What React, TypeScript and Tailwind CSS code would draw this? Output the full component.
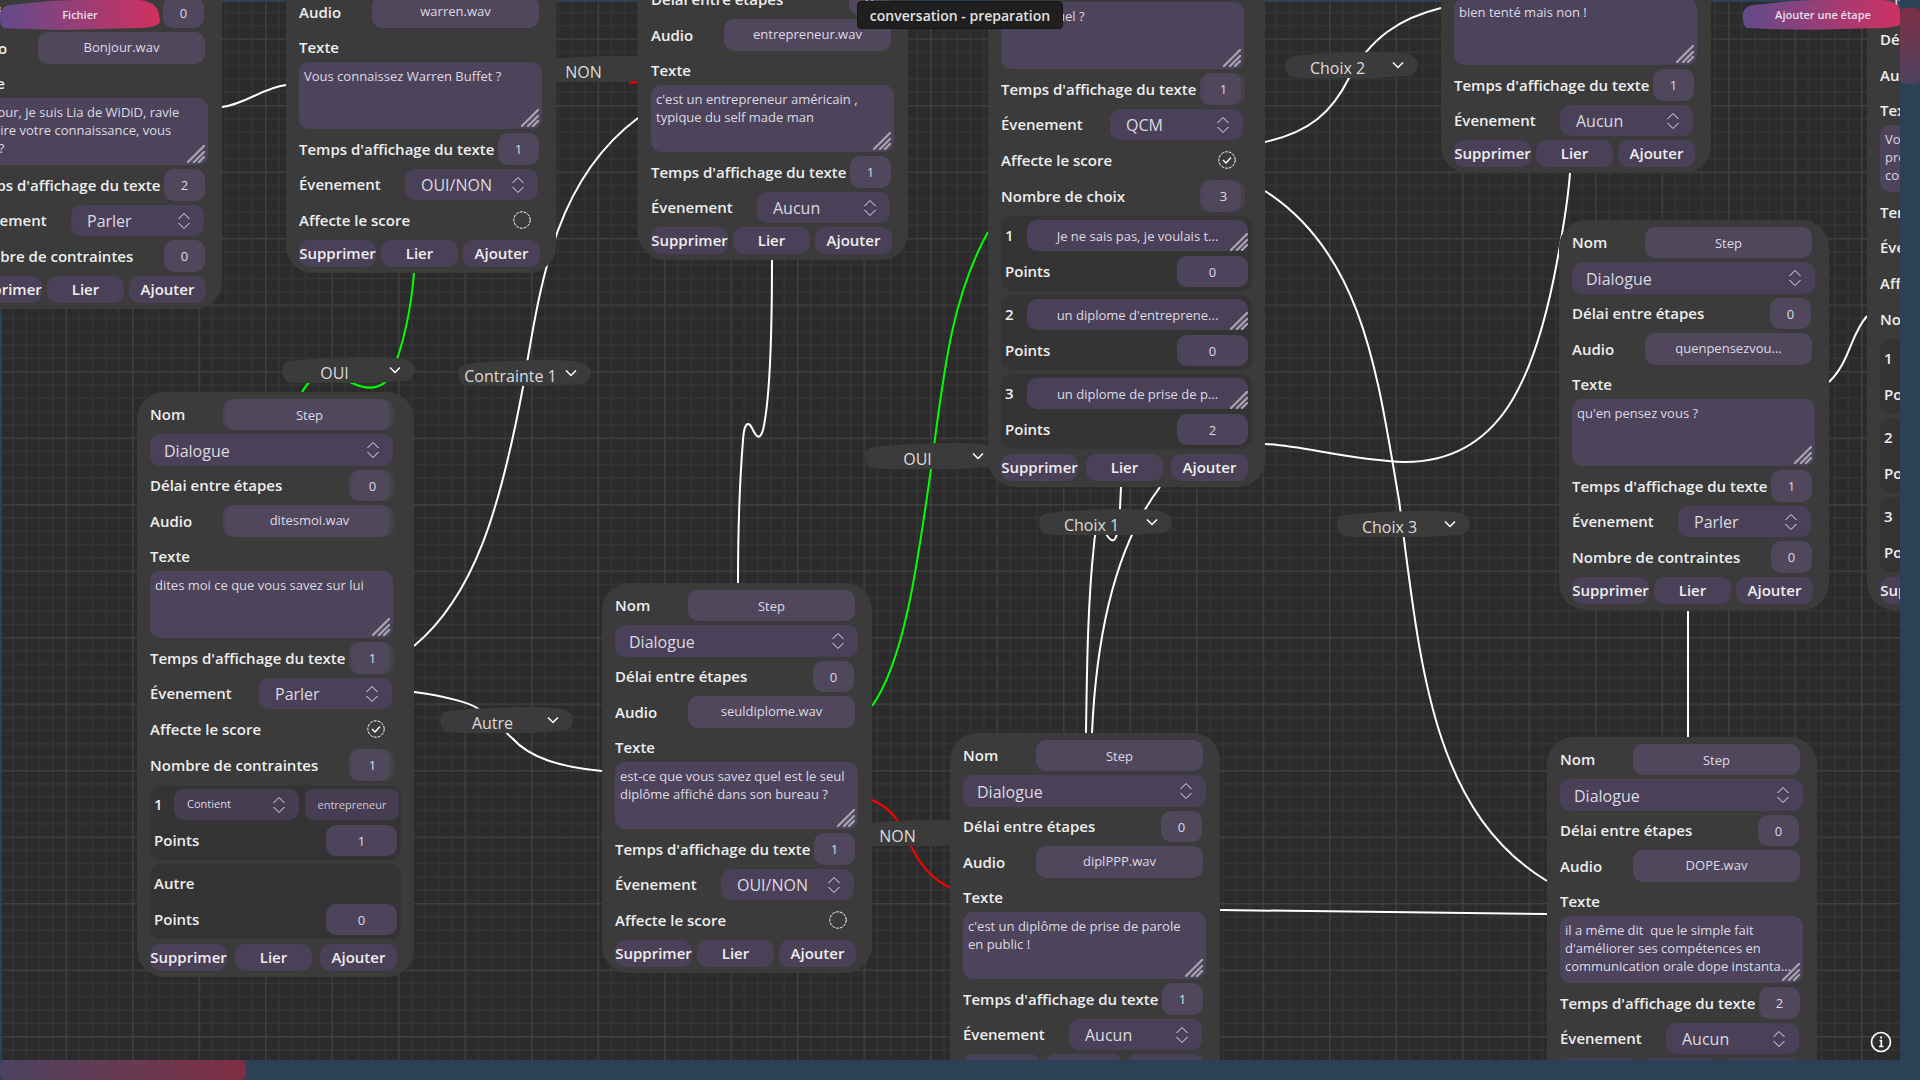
import type { ReactNode } from "react"
import clsx from "clsx"

type Choice = {
    text?: string
    rule?: string
    word?: string
    points: string
}

type Step = {
    id: string
    x: number
    y: number
    wide?: boolean
    audio: string
    text: string
    time: string
    event: string
    score?: boolean
    count?: string
    choices?: Choice[]
}

const qcmChoices: Choice[] = [
    { text: "Je ne sais pas, je voulais t...", points: "0" },
    { text: "un diplome d'entreprene...", points: "0" },
    { text: "un diplome de prise de p...", points: "2" },
]

const steps: Step[] = [
    { id: "bonjour", x: -48, y: -81, audio: "Bonjour.wav", text: "Bonjour, je suis Lia de WiDiD, ravie\nde faire votre connaissance, vous\nêtes ?", time: "2", event: "Parler", count: "0" },
    { id: "warren", x: 286, y: -117, audio: "warren.wav", text: "Vous connaissez Warren Buffet ?", time: "1", event: "OUI/NON", score: false },
    { id: "entrepreneur", x: 638, y: -94, audio: "entrepreneur.wav", text: "c'est un entrepreneur américain ,\ntypique du self made man", time: "1", event: "Aucun" },
    { id: "lequel", x: 988, y: -177, wide: true, audio: "lequel.wav", text: "C'est lequel ?", time: "1", event: "QCM", score: true, count: "3", choices: qcmChoices },
    { id: "tente", x: 1441, y: -181, audio: "bientente.wav", text: "bien tenté mais non !", time: "1", event: "Aucun" },
    { id: "pensez", x: 1559, y: 220, audio: "quenpensezvou...", text: "qu'en pensez vous ?", time: "1", event: "Parler", count: "0" },
    { id: "voulez", x: 1867, y: -54, wide: true, audio: "voulez.wav", text: "Vous\nprenez\ncombien ?", time: "1", event: "QCM", score: true, count: "3", choices: qcmChoices },
    {
        id: "ditesmoi", x: 137, y: 392, wide: true, audio: "ditesmoi.wav", text: "dites moi ce que vous savez sur lui", time: "1", event: "Parler", score: true, count: "1",
        choices: [{ rule: "Contient", word: "entrepreneur", points: "1" }, { points: "0" }],
    },
    { id: "seuldiplome", x: 602, y: 583, audio: "seuldiplome.wav", text: "est-ce que vous savez quel est le seul\ndiplôme affiché dans son bureau ?", time: "1", event: "OUI/NON", score: false },
    { id: "diplppp", x: 950, y: 733, audio: "diplPPP.wav", text: "c'est un diplôme de prise de parole\nen public !", time: "1", event: "Aucun" },
    { id: "dope", x: 1547, y: 737, audio: "DOPE.wav", text: "il a même dit  que le simple fait\nd'améliorer ses compétences en\ncommunication orale dope instanta...", time: "2", event: "Aucun" },
]

const links = [
    { id: "1", label: "OUI", x: 282, y: 357 },
    { id: "2", label: "Contrainte 1", x: 458, y: 360 },
    { id: "3", label: "NON", x: 531, y: 56 },
    { id: "4", label: "Choix 2", x: 1285, y: 52 },
    { id: "5", label: "OUI", x: 865, y: 443 },
    { id: "6", label: "Choix 1", x: 1039, y: 509 },
    { id: "7", label: "Choix 3", x: 1337, y: 511 },
    { id: "8", label: "Autre", x: 440, y: 707 },
    { id: "9", label: "NON", x: 845, y: 820 },
]

const wires = [
    { color: "#fff", d: "M222 107 C246 104 262 88 286 85" },
    { color: "#fff", d: "M414 646 C474 596 500 510 523 387 C541 280 555 180 638 118" },
    { color: "#fff", d: "M772 260 C772 330 770 400 763 430 C759 444 754 432 752 428 C748 420 744 424 743 440 C739 490 738 530 738 583" },
    { color: "#fff", d: "M414 692 C445 696 470 703 477 708 C495 720 505 732 512 738 C530 758 560 767 602 771" },
    { color: "#fff", d: "M1121 487 L1120 508 C1118 545 1113 545 1106 534 C1098 520 1095 530 1094 545 C1088 600 1087 660 1086 733" },
    { color: "#fff", d: "M1160 487 C1120 540 1097 620 1092 733" },
    { color: "#fff", d: "M1265 142 C1310 132 1332 112 1349 78 C1370 38 1400 18 1441 8" },
    { color: "#fff", d: "M1265 191 C1365 255 1378 380 1399 500 C1420 660 1430 810 1547 881" },
    { color: "#fff", d: "M1265 444 C1300 445 1350 460 1405 462 C1500 462 1535 380 1557 262 C1563 230 1568 200 1570 173" },
    { color: "#fff", d: "M1688 611 V737" },
    { color: "#fff", d: "M1829 382 C1850 362 1850 335 1867 316" },
    { color: "#fff", d: "M1220 910 L1547 914" },
    { color: "#0f0", d: "M414 273 C411 310 403 345 392 373 C382 392 366 390 350 382 C332 368 315 370 302 392" },
    { color: "#0f0", d: "M872 706 C905 660 918 560 931 469 C943 380 950 300 988 232" },
    { color: "#f00", d: "M872 800 C900 812 900 830 912 848 C922 868 935 881 951 888" },
    { color: "#f00", d: "M629 82.5 H638" },
]

const minor = [13.3, 26.6, 39.9, 53.2]

const Grid = () => (
    <div className="absolute inset-0 overflow-hidden border-t-2 border-l-2 border-[#2c4156] bg-[#2b2b2b]">
        <svg className="h-full w-full" aria-hidden="true">
            <defs>
                <pattern id="grid" x="-3" y="36.5" width="66.5" height="66.5" patternUnits="userSpaceOnUse">
                    {minor.map(m => (
                        <path key={m} d={`M${m + 0.6} 0 V66.5 M0 ${m + 0.6} H66.5`} stroke="#353535" strokeWidth="1.4" />
                    ))}
                    <path d="M0.7 0 V66.5 M0 0.7 H66.5" stroke="#404040" strokeWidth="1.4" />
                </pattern>
            </defs>
            <rect width="100%" height="100%" fill="url(#grid)" />
        </svg>
    </div>
)

const UpDown = () => (
    <svg className="pointer-events-none absolute top-1/2 right-3.5 h-4 w-3 -translate-y-1/2" viewBox="0 0 12 16" fill="none" stroke="#e8e6ec" aria-hidden="true">
        <path d="M0.5 6 L6 0.5 L11.5 6 M0.5 10 L6 15.5 L11.5 10" />
    </svg>
)

const Grip = ({ className }: { className: string }) => (
    <svg className={clsx("pointer-events-none absolute h-[18px] w-[18px]", className)} viewBox="0 0 18 18" stroke="#a7a3ad" strokeWidth="2.4" strokeLinecap="round" aria-hidden="true">
        <path d="M1 17 L17 1 M7 17 L17 7 M12 17 L17 12" />
    </svg>
)

const Field = ({ label, height, className, children }: { label: string, height: string, className?: string, children: ReactNode }) => (
    <label className={clsx("flex items-center justify-between whitespace-nowrap", height, className)}>
        <span>{label}</span>
        {children}
    </label>
)

const boxClass = "h-full rounded-[10px] text-center text-[13px] font-normal text-[#dedae3]"

const Select = ({ value, className, label }: { value: string, className: string, label?: string }) => (
    <span className="relative block h-full">
        <select defaultValue={value} aria-label={label} className={clsx("h-full appearance-none rounded-[10px] font-normal text-[#dcdae0]", className)}>
            <option>{value}</option>
        </select>
        <UpDown />
    </span>
)

const ScoreCheck = ({ checked }: { checked: boolean }) => (
    <span className="relative block h-[18px] w-[18px]">
        <input type="checkbox" defaultChecked={checked} className="block h-[18px] w-[18px] appearance-none" />
        <svg className="pointer-events-none absolute inset-0" viewBox="0 0 18 18" fill="none" stroke="#fff" aria-hidden="true">
            <circle cx="9" cy="9" r="8.2" strokeDasharray="3 1" />
            {checked && <path d="M5 9 L8 12 L13 6.5" strokeWidth="1.4" />}
        </svg>
    </span>
)

const ChoiceBox = ({ choice, index }: { choice: Choice, index: number }) => (
    <div className="flex w-[251px] flex-col gap-[5px] rounded-[10px] bg-[#343434] py-1 pr-1 pl-1">
        {choice.text && (
            <Field label={String(index + 1)} height="h-[31px]">
                <span className="relative block h-full">
                    <input type="text" defaultValue={choice.text} className={clsx(boxClass, "w-[221px] bg-[#4a4158]")} />
                    <Grip className="right-0 bottom-0" />
                </span>
            </Field>
        )}
        {choice.rule && (
            <div className="-mr-0.5 flex h-[31px] items-center">
                <span className="w-5">{index + 1}</span>
                <Select value={choice.rule} label="Règle" className="w-[125px] bg-[#463d52] pl-[13px] text-[11px]" />
                <input type="text" aria-label="Mot" defaultValue={choice.word} className="ml-auto h-full w-[94px] rounded-lg bg-[#463d52] text-center text-[11px] font-normal text-[#ccc7d1]" />
            </div>
        )}
        {!choice.text && !choice.rule && <div className="flex h-[31px] items-center">Autre</div>}
        <Field label="Points" height="h-[31px]">
            <input type="text" inputMode="numeric" defaultValue={choice.points} className={clsx(boxClass, "w-[71px] bg-[#4d445b]")} />
        </Field>
    </div>
)

const StepCard = ({ step }: { step: Step }) => {
    const { wide } = step
    const input = clsx(boxClass, "bg-[#50475d]", wide && "pl-1.5 shadow-[4px_0_0_#434244,inset_3px_0_0_#4b4359]")
    const pr = wide ? "pr-[3px]" : "pr-1"

    return (
        <article
            className={clsx("absolute flex flex-col gap-1 rounded-[27px] bg-[#3b3b3b] pt-[7px] pb-1.5 pl-[13px] text-[15px] font-semibold text-[#eeeeee]", wide ? "w-[277px]" : "w-[270px]")}
            style={{ left: step.x, top: step.y }}
        >
            <div className="flex w-[243px] flex-col gap-1">
                <Field label="Nom" height="h-[31px]" className="pr-[3px]">
                    <input type="text" defaultValue="Step" className={clsx(input, "w-[167px]")} />
                </Field>
                <div className="h-8">
                    <Select value="Dialogue" label="Type" className="w-[243px] bg-[#4a4158] pt-0.5 pl-3.5 text-base" />
                </div>
                <Field label="Délai entre étapes" height="h-[31px]" className={pr}>
                    <input type="text" inputMode="numeric" defaultValue="0" className={clsx(input, "w-[41px]")} />
                </Field>
                <Field label="Audio" height="h-8" className="pr-[3px]">
                    <button type="button" className={clsx(input, "w-[167px]")}>{step.audio}</button>
                </Field>
                <label htmlFor={step.id} className="flex h-[26px] items-center pt-1">Texte</label>
                <div className="relative h-[67px]">
                    <textarea
                        id={step.id}
                        defaultValue={step.text}
                        className="block h-full w-full resize-none overflow-hidden rounded-[10px] bg-[#4d445b] px-[5px] pt-[5px] text-[13px] leading-[18px] font-normal whitespace-pre text-[#dedae3]"
                    />
                    <Grip className="right-[3px] bottom-[2px]" />
                </div>
                <Field label="Temps d'affichage du texte" height="h-8" className="pr-[3px]">
                    <input type="text" inputMode="numeric" defaultValue={step.time} className={clsx(input, "w-[41px]")} />
                </Field>
                <Field label="Évenement" height="h-[31px]" className={wide ? "pr-px" : "pr-1"}>
                    <Select value={step.event} className="w-[133px] bg-[#4a4158] pl-4 text-base" />
                </Field>
                {step.score !== undefined && (
                    <Field label="Affecte le score" height="h-8" className={wide ? "pr-2" : "pr-[11px]"}>
                        <ScoreCheck checked={step.score} />
                    </Field>
                )}
                {step.count && (
                    <Field label={step.event === "QCM" ? "Nombre de choix" : "Nombre de contraintes"} height="h-8" className="pr-[3px]">
                        <input type="text" inputMode="numeric" defaultValue={step.count} className={clsx(input, "w-[41px]")} />
                    </Field>
                )}
            </div>
            {step.choices?.map((choice, i) => <ChoiceBox key={i} choice={choice} index={i} />)}
            <div className={clsx("flex", wide ? "gap-2 pt-px" : "gap-[5px]")}>
                {["Supprimer", "Lier", "Ajouter"].map(name => (
                    <button key={name} type="button" className="h-[27px] w-[77px] rounded-[10px] bg-[#4a4058]">{name}</button>
                ))}
            </div>
        </article>
    )
}

const LinkLabel = ({ label, x, y }: { label: string, x: number, y: number }) => (
    <div className="absolute h-[27px] w-[133px]" style={{ left: x, top: y }}>
        <svg className="absolute inset-0" viewBox="0 0 133 27" aria-hidden="true">
            <path d="M0 12 Q1 5 8 4 L18 3 Q50 0 90 0 Q120 0 127 4 Q133 8 133 13 Q132 22 124 24 L104 25 L94 26 L20 26 L6 25 Q0 22 0 12Z" fill="#3b3b3b" />
        </svg>
        <select defaultValue={label} aria-label="Lien" className="relative h-full w-full appearance-none pt-1 pr-7 text-base text-[#dcdcdc] [text-align-last:center]">
            <option>{label}</option>
        </select>
        <svg className="pointer-events-none absolute top-2.5 right-3.5 h-[7px] w-3" viewBox="0 0 12 7" fill="none" stroke="#fff" strokeWidth="1.5" aria-hidden="true">
            <path d="M1 0.5 L6 5.5 L11 0.5" />
        </svg>
    </div>
)

const GradientButton = ({ children, className }: { children: ReactNode, className: string }) => (
    <button type="button" className={clsx("absolute top-0 h-[30px] w-40 text-[11px] font-semibold text-[#eadfe9]", className)}>
        <svg className="absolute inset-0" viewBox="0 0 160 30" aria-hidden="true">
            <defs>
                <linearGradient id="pink">
                    <stop offset="0" stopColor="#624b8c" />
                    <stop offset="1" stopColor="#d0305f" />
                </linearGradient>
            </defs>
            <path d="M0 13 Q2 6 10 5 L50 1 Q80 -1 140 0 Q157 2 159 14 L160 22 Q158 27 140 28 L100 29 Q60 31 4 28 Q0 26 0 18Z" fill="url(#pink)" />
        </svg>
        <span className="relative">{children}</span>
    </button>
)

const App = () => (
    <div className="grid h-screen grid-cols-[1fr_20px] grid-rows-[1fr_20px] overflow-hidden bg-[#2c4156] font-['Open_Sans',sans-serif]">
        <main className="relative overflow-hidden">
            <Grid />
            <svg className="absolute inset-0 h-full w-full" fill="none" strokeWidth="2" aria-hidden="true">
                {wires.map(w => <path key={w.d} d={w.d} stroke={w.color} />)}
            </svg>
            {links.map(l => <LinkLabel key={l.id} label={l.label} x={l.x} y={l.y} />)}
            {steps.map(s => <StepCard key={s.id} step={s} />)}

            <GradientButton className="left-0">Fichier</GradientButton>
            <GradientButton className="-right-[3px]">Ajouter une étape</GradientButton>
            <h1 className="absolute top-px left-[857px] flex h-7 w-[206px] items-center justify-center rounded-sm border border-[#171717] bg-[#1f1f1f] text-[14px] font-semibold whitespace-nowrap text-[#e2e2e2]">
                conversation - preparation
            </h1>
            <button type="button" aria-label="Informations" className="absolute right-2 bottom-[7px] h-[22px] w-[22px]">
                <svg viewBox="0 0 22 22" fill="none" stroke="#fff" strokeWidth="1.7">
                    <circle cx="11" cy="11" r="9.5" />
                    <path d="M9.5 9.5 H11.3 V15 M9 15.5 H13.5" />
                    <path d="M10.2 6.5 H12" strokeWidth="2" />
                </svg>
            </button>
        </main>
        <div className="pt-2">
            <div className="h-[76px] rounded-[5px] bg-linear-to-b from-[#7e2d44] to-[#4c4260]" />
        </div>
        <div>
            <div className="h-5 w-[246px] rounded-[5px] bg-linear-to-r from-[#4c4260] to-[#7e2d44]" />
        </div>
    </div>
)

export default App
